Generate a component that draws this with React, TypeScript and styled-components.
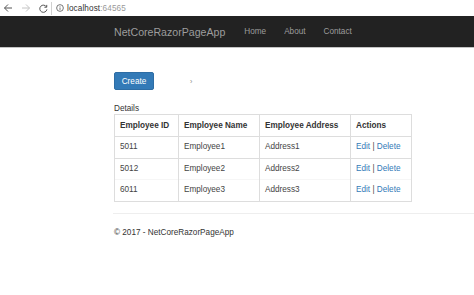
import React from "react";
import styled, { createGlobalStyle } from "styled-components";

const Global = createGlobalStyle`
  html, body { margin: 0; padding: 0; background: #fff; }
  body { font-family: "Liberation Sans", Arial, sans-serif; color: #333; }
`;

const Page = styled.div`
  width: 474px;
  height: 295px;
  overflow: hidden;
  background: #fff;
`;

const BrowserBar = styled.div`
  height: 16px;
  display: flex;
  align-items: center;
  padding-left: 2px;
  background: #fff;
`;

const NavIcon = styled.span<{ $light?: boolean; $w: number }>`
  width: ${(p) => p.$w}px;
  display: inline-flex;
  align-items: center;
  justify-content: center;
  color: ${(p) => (p.$light ? "#c4c4c4" : "#555")};
`;

const Divider = styled.span`
  width: 1px;
  height: 13px;
  background: #d0d0d0;
  margin: 0 4px 0 3px;
`;

const Url = styled.span`
  font-size: 8.2px;
  color: #333;
  margin-left: 3px;
  letter-spacing: 0.1px;
`;

const UrlPort = styled.span`
  color: #999;
`;

const Navbar = styled.nav`
  height: 31px;
  background: #222;
  border-bottom: 1px solid #c4c4c4;
  display: flex;
  align-items: center;
  padding-left: 114px;
  box-sizing: content-box;
`;

const Brand = styled.span`
  font-size: 10.6px;
  color: #9d9d9d;
  margin-right: 19px;
`;

const NavLink = styled.span`
  font-size: 8.2px;
  color: #9d9d9d;
  margin-right: 18px;
`;

const Container = styled.main`
  padding-left: 114px;
  padding-top: 24px;
`;

const Toolbar = styled.div`
  display: flex;
  align-items: center;
  height: 18px;
`;

const Button = styled.button`
  width: 40px;
  height: 18px;
  background: #337ab7;
  border: 1px solid #2e6da4;
  border-radius: 2px;
  color: #fff;
  font-family: "Liberation Sans", Arial, sans-serif;
  font-size: 8.2px;
  padding: 0;
  display: flex;
  align-items: center;
  justify-content: center;
`;

const Cursor = styled.span`
  margin-left: 36px;
  font-size: 7px;
  color: #888;
`;

const Caption = styled.div`
  font-size: 8.2px;
  color: #333;
  margin-top: 14px;
  line-height: 10px;
`;

const Table = styled.table`
  margin-top: 0;
  border-collapse: collapse;
  border: 1px solid #ddd;
  font-size: 8.2px;
`;

const Th = styled.th<{ $w: number }>`
  width: ${(p) => p.$w}px;
  box-sizing: border-box;
  text-align: left;
  font-weight: bold;
  color: #333;
  padding: 5px 5px;
  line-height: 11px;
  border: 1px solid #ddd;
`;

const Td = styled.td<{ $noTop?: boolean }>`
  padding: 5px 5px;
  line-height: 10.5px;
  color: #444;
  border-left: 1px solid #ddd;
  border-right: 1px solid #ddd;
  border-top: 1px solid ${(p) => (p.$noTop ? "#f6f6f6" : "#ddd")};
`;

const Link = styled.a`
  color: #337ab7;
  text-decoration: none;
`;

const Rule = styled.hr`
  margin: 11px 0 0 -1px;
  border: 0;
  border-top: 1px solid #eee;
  height: 0;
`;

const Footer = styled.footer`
  font-size: 8.2px;
  color: #333;
  margin-top: 14px;
`;

const rows = [
  { id: "5011", name: "Employee1", addr: "Address1" },
  { id: "5012", name: "Employee2", addr: "Address2" },
  { id: "6011", name: "Employee3", addr: "Address3" },
];

export default function App() {
  return (
    <Page>
      <Global />
      <BrowserBar>
        <NavIcon $w={12}>
          <svg width="10" height="10" viewBox="0 0 10 10" fill="none" stroke="currentColor" strokeWidth="1">
            <path d="M9 5H1.5M5 1.5L1.5 5L5 8.5" />
          </svg>
        </NavIcon>
        <NavIcon $w={24} $light>
          <svg width="10" height="10" viewBox="0 0 10 10" fill="none" stroke="currentColor" strokeWidth="1">
            <path d="M1 5H8.5M5 1.5L8.5 5L5 8.5" />
          </svg>
        </NavIcon>
        <NavIcon $w={10}>
          <svg width="9" height="9" viewBox="0 0 10 10" fill="none" stroke="currentColor" strokeWidth="1.1">
            <path d="M8.3 3.2A4 4 0 1 0 8.8 6" />
            <path d="M8.6 1V3.6H6" />
          </svg>
        </NavIcon>
        <Divider />
        <NavIcon $w={8}>
          <svg width="8" height="8" viewBox="0 0 10 10" fill="none" stroke="currentColor" strokeWidth="1">
            <circle cx="5" cy="5" r="4.2" />
            <path d="M5 4.3V7.4M5 2.6V3.4" />
          </svg>
        </NavIcon>
        <Url>
          localhost<UrlPort>:64565</UrlPort>
        </Url>
      </BrowserBar>
      <Navbar>
        <Brand>NetCoreRazorPageApp</Brand>
        <NavLink>Home</NavLink>
        <NavLink>About</NavLink>
        <NavLink>Contact</NavLink>
      </Navbar>
      <Container>
        <Toolbar>
          <Button>Create</Button>
          <Cursor>›</Cursor>
        </Toolbar>
        <Caption>Details</Caption>
        <Table>
          <thead>
            <tr>
              <Th $w={64}>Employee ID</Th>
              <Th $w={81}>Employee Name</Th>
              <Th $w={91}>Employee Address</Th>
              <Th $w={61}>Actions</Th>
            </tr>
          </thead>
          <tbody>
            {rows.map((r, i) => (
              <tr key={r.id}>
                <Td $noTop={i === 2}>{r.id}</Td>
                <Td $noTop={i === 2}>{r.name}</Td>
                <Td $noTop={i === 2}>{r.addr}</Td>
                <Td $noTop={i === 2}>
                  <Link href="#">Edit</Link> | <Link href="#">Delete</Link>
                </Td>
              </tr>
            ))}
          </tbody>
        </Table>
        <Rule />
        <Footer>© 2017 - NetCoreRazorPageApp</Footer>
      </Container>
    </Page>
  );
}
